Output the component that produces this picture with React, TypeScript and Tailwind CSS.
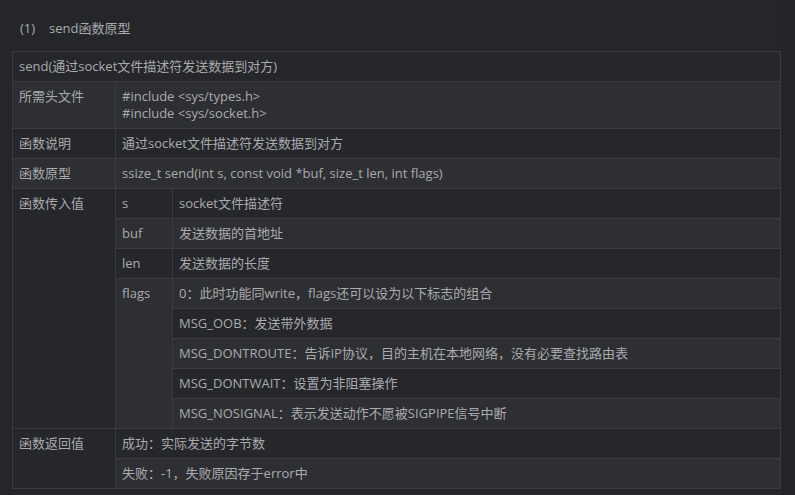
const FONT = '[font-family:"Segoe_UI","Open_Sans","Noto_Sans_CJK_SC",sans-serif]'

type Sub = { key?: string; value: string }

const PARAMS: Sub[] = [
  { key: 's', value: 'socket文件描述符' },
  { key: 'buf', value: '发送数据的首地址' },
  { key: 'len', value: '发送数据的长度' },
]

const FLAGS = [
  '0：此时功能同write，flags还可以设为以下标志的组合',
  'MSG_OOB：发送带外数据',
  'MSG_DONTROUTE：告诉IP协议，目的主机在本地网络，没有必要查找路由表',
  'MSG_DONTWAIT：设置为非阻塞操作',
  'MSG_NOSIGNAL：表示发送动作不愿被SIGPIPE信号中断',
]

const cell = 'border border-[#3a3b3e] px-[6px] py-[6px] align-top leading-[17px]'
const row = 'odd:bg-[#26272a] even:bg-[#2e2f32]'

export default function App() {
  return (
    <div className={`flex h-[495px] w-[795px] overflow-hidden bg-[#25262a] text-[13px] text-[#a9abae] ${FONT}`}>
      <div className="flex-1 pl-3 pr-[1px]">
        {/* previous paragraph, scrolled off the top */}
        <div className="-mt-[15px] h-[17px] whitespace-nowrap pl-6 leading-[17px] text-[#8d8f92]">
          在建立连接之后，服务端与客户端都可以通过send函数向对方发送数据，以下是send函数的说明
        </div>
        <p className="mt-[18px] pl-[8px] leading-[17px]">
          (1)<span className="ml-[14px]">send函数原型</span>
        </p>
        <table className="mt-[14px] w-[769px] table-fixed border-collapse">
          <colgroup>
            <col className="w-[103px]" />
            <col className="w-[57px]" />
            <col />
          </colgroup>
          <tbody>
            <tr className={row}>
              <td colSpan={3} className={cell}>send(通过socket文件描述符发送数据到对方)</td>
            </tr>
            <tr className={row}>
              <td className={cell}>所需头文件</td>
              <td colSpan={2} className={cell}>
                #include &lt;sys/types.h&gt;
                <br />
                #include &lt;sys/socket.h&gt;
              </td>
            </tr>
            <tr className={row}>
              <td className={cell}>函数说明</td>
              <td colSpan={2} className={cell}>通过socket文件描述符发送数据到对方</td>
            </tr>
            <tr className={row}>
              <td className={cell}>函数原型</td>
              <td colSpan={2} className={cell}>ssize_t send(int s, const void *buf, size_t len, int flags)</td>
            </tr>
            {PARAMS.map((p, i) => (
              <tr key={p.key} className={row}>
                {i === 0 && (
                  <td rowSpan={PARAMS.length + FLAGS.length} className={cell}>
                    函数传入值
                  </td>
                )}
                <td className={cell}>{p.key}</td>
                <td className={cell}>{p.value}</td>
              </tr>
            ))}
            {FLAGS.map((f, i) => (
              <tr key={f} className={row}>
                {i === 0 && (
                  <td rowSpan={FLAGS.length} className={cell}>
                    flags
                  </td>
                )}
                <td className={cell}>{f}</td>
              </tr>
            ))}
            <tr className={row}>
              <td rowSpan={2} className={cell}>函数返回值</td>
              <td colSpan={2} className={cell}>成功：实际发送的字节数</td>
            </tr>
            <tr className={row}>
              <td colSpan={2} className={cell}>失败：-1，失败原因存于error中</td>
            </tr>
          </tbody>
        </table>
      </div>
      <div className="w-[13px] bg-[#232427]" />
    </div>
  )
}
